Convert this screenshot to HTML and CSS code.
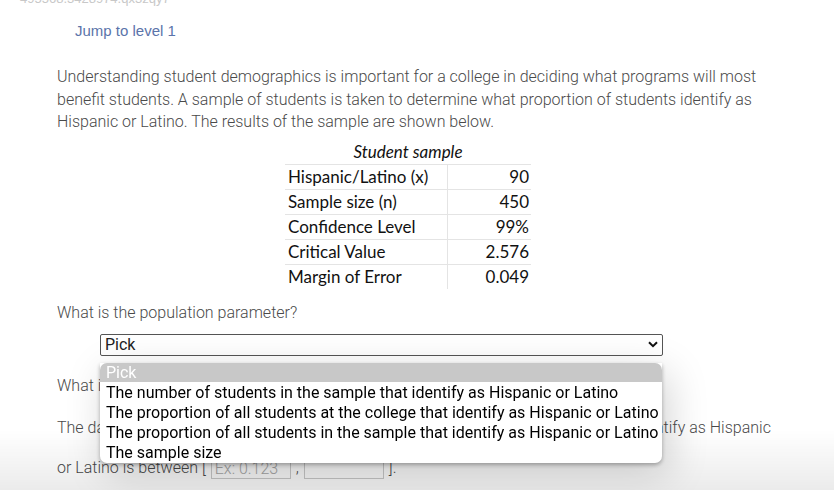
FILE: index.html
```html
<!DOCTYPE html>
<html lang="en">
<head>
  <meta charset="UTF-8">
  <title>Confidence interval for a proportion</title>
  <link rel="stylesheet" href="styles.css">
</head>
<body>
<div class="tag-id">495568.3428974.qx3zqy7</div>

<div class="page">
  <a class="jump" href="#">Jump to level 1</a>

  <p class="intro">Understanding student demographics is important for a college in deciding what programs will most benefit students. A sample of students is taken to determine what proportion of students identify as Hispanic or Latino. The results of the sample are shown below.</p>

  <table class="sample">
    <caption>Student sample</caption>
    <tr><td>Hispanic/Latino (x)</td><td class="num">90</td></tr>
    <tr><td>Sample size (n)</td><td class="num">450</td></tr>
    <tr><td>Confidence Level</td><td class="num">99%</td></tr>
    <tr><td>Critical Value</td><td class="num">2.576</td></tr>
    <tr><td>Margin of Error</td><td class="num">0.049</td></tr>
  </table>

  <p class="question">What is the population parameter?</p>

  <div class="pick-wrap">
    <div class="pick">
      <span>Pick</span>
      <svg class="chev" width="10" height="7" viewBox="0 0 10 7"><path d="M1 1.2 L5 5.2 L9 1.2" fill="none" stroke="#111" stroke-width="2"/></svg>
    </div>

    <!-- open dropdown list -->
    <ul class="options">
      <li class="selected">Pick</li>
      <li>The number of students in the sample that identify as Hispanic or Latino</li>
      <li>The proportion of all students at the college that identify as Hispanic or Latino</li>
      <li>The proportion of all students in the sample that identify as Hispanic or Latino</li>
      <li>The sample size</li>
    </ul>
  </div>

  <p class="question q2">What is the sample statistic?</p>

  <p class="question q3">The data supports that the population proportion of all students at the college that identify as Hispanic<br>
    or Latino is between [<input class="blank" placeholder="Ex: 0.123">,<input class="blank">].</p>
</div>

<div class="fade"></div>
</body>
</html>
```

FILE: styles.css
```css
body {
  margin: 0;
  background-color: #fff;
  font-family: Roboto, "Liberation Sans", sans-serif;
  overflow: hidden;
}

.tag-id {
  margin: -9px 0 0 20px;
  font-size: 13px;
  color: #c8c8c8;
  font-family: "Liberation Sans", sans-serif;
}

.page {
  padding: 0 36px 0 57px;
}

.jump {
  display: block;
  margin: 16px 0 0 18px;
  font-family: "Liberation Sans", Arial, sans-serif;
  font-size: 15px;
  color: #5b74aa;
  text-decoration: none;
}

.intro {
  margin: 27px 0 0;
  font-size: 16px;
  font-weight: 300;
  line-height: 22.5px;
  color: #4a4a4a;
}

.sample {
  margin: 8px 0 0 228px;
  border-collapse: collapse;
  font-family: Lato, "Open Sans", sans-serif;
  font-size: 17px;
  color: #111;
}

.sample caption {
  font-style: italic;
  height: 22px;
  line-height: 20px;
}

.sample td {
  height: 24px;
  padding: 0 2px 0 3px;
  border-top: 1px solid #e4e4e4;
}

.sample td:first-child {
  width: 157px;
  border-right: 1px solid #e4e4e4;
}

.sample td.num {
  width: 78px;
  text-align: right;
}

.question {
  margin: 13px 0 0;
  font-size: 16px;
  font-weight: 300;
  color: #4a4a4a;
  line-height: 22px;
}

.pick-wrap {
  position: relative;
  margin: 10px 0 0 43px;
  width: 563px;
}

.pick {
  display: flex;
  align-items: center;
  justify-content: space-between;
  height: 20px;
  padding: 0 4px 0 4px;
  border: 1px solid #555;
  border-radius: 2px;
  font-size: 16px;
  color: #222;
}

.options {
  position: absolute;
  top: 29px;
  left: 0;
  width: 562px;
  margin: 0;
  padding: 0;
  list-style: none;
  background: #fff;
  border-radius: 0 0 7px 7px;
  box-shadow: 0 2px 4px rgba(0, 0, 0, 0.3), 6px 10px 40px rgba(0, 0, 0, 0.18);
  font-size: 16px;
  color: #000;
  z-index: 2;
}

.options li {
  padding-left: 6px;
  height: 20px;
  line-height: 20.5px;
  white-space: nowrap;
}

.options li.selected {
  background: #c8c8c8;
  color: #fff;
  height: 19px;
  line-height: 19px;
  border-radius: 7px 7px 0 0;
  margin-bottom: 1px;
}

.q2 {
  margin-top: 19px;
}

.q3 {
  margin-top: 19px;
  line-height: 40px;
  position: relative;
  top: -8px;
}

.blank {
  width: 72px;
  height: 18px;
  margin: 0 5px;
  padding: 1px 3px;
  border: 1px solid #ccc;
  font-family: Roboto, sans-serif;
  font-size: 16px;
  font-weight: 300;
  vertical-align: middle;
}

.blank::placeholder {
  color: #aaa;
}

.fade {
  position: fixed;
  left: 0;
  right: 0;
  bottom: 0;
  height: 60px;
  background: linear-gradient(rgba(0, 0, 0, 0), rgba(0, 0, 0, 0.08));
  pointer-events: none;
}
```
